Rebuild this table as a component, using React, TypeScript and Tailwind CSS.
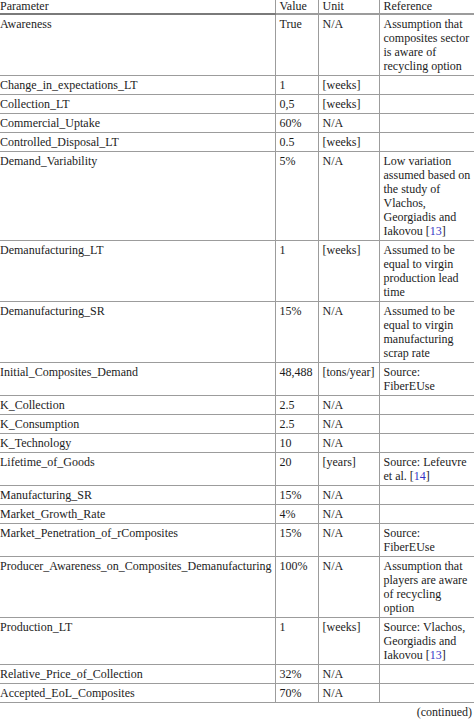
const rows: { name: string; value: string; unit: string; ref: (string | { cite: string; before: string })[] }[] = [
  { name: 'Awareness', value: 'True', unit: 'N/A', ref: ['Assumption that', 'composites sector', 'is aware of', 'recycling option'] },
  { name: 'Change_in_expectations_LT', value: '1', unit: '[weeks]', ref: [] },
  { name: 'Collection_LT', value: '0,5', unit: '[weeks]', ref: [] },
  { name: 'Commercial_Uptake', value: '60%', unit: 'N/A', ref: [] },
  { name: 'Controlled_Disposal_LT', value: '0.5', unit: '[weeks]', ref: [] },
  {
    name: 'Demand_Variability', value: '5%', unit: 'N/A',
    ref: ['Low variation', 'assumed based on', 'the study of', 'Vlachos,', 'Georgiadis and', { before: 'Iakovou ', cite: '13' }],
  },
  { name: 'Demanufacturing_LT', value: '1', unit: '[weeks]', ref: ['Assumed to be', 'equal to virgin', 'production lead', 'time'] },
  { name: 'Demanufacturing_SR', value: '15%', unit: 'N/A', ref: ['Assumed to be', 'equal to virgin', 'manufacturing', 'scrap rate'] },
  { name: 'Initial_Composites_Demand', value: '48,488', unit: '[tons/year]', ref: ['Source:', 'FiberEUse'] },
  { name: 'K_Collection', value: '2.5', unit: 'N/A', ref: [] },
  { name: 'K_Consumption', value: '2.5', unit: 'N/A', ref: [] },
  { name: 'K_Technology', value: '10', unit: 'N/A', ref: [] },
  { name: 'Lifetime_of_Goods', value: '20', unit: '[years]', ref: ['Source: Lefeuvre', { before: 'et al. ', cite: '14' }] },
  { name: 'Manufacturing_SR', value: '15%', unit: 'N/A', ref: [] },
  { name: 'Market_Growth_Rate', value: '4%', unit: 'N/A', ref: [] },
  { name: 'Market_Penetration_of_rComposites', value: '15%', unit: 'N/A', ref: ['Source:', 'FiberEUse'] },
  {
    name: 'Producer_Awareness_on_Composites_Demanufacturing', value: '100%', unit: 'N/A',
    ref: ['Assumption that', 'players are aware', 'of recycling', 'option'],
  },
  { name: 'Production_LT', value: '1', unit: '[weeks]', ref: ['Source: Vlachos,', 'Georgiadis and', { before: 'Iakovou ', cite: '13' }] },
  { name: 'Relative_Price_of_Collection', value: '32%', unit: 'N/A', ref: [] },
  { name: 'Accepted_EoL_Composites', value: '70%', unit: 'N/A', ref: [] },
];

const cell = 'align-top pt-[2px] pb-[2px] border-b border-[#9c9c9c]';
const sep = 'border-l border-[#9c9c9c] pl-[4px]';
const head = 'pb-[1px] pt-0 text-left font-normal leading-[12px] border-b-2 border-[#7a7a7a]';

export default function App() {
  return (
    <div
      className="h-[719px] w-[474px] overflow-hidden bg-white text-[12px] leading-[14px] text-[#1c1c1c]"
      style={{ fontFamily: '"Liberation Serif", "Times New Roman", serif' }}
    >
      <table className="w-[474px] table-fixed border-collapse">
        <colgroup>
          <col className="w-[275px]" />
          <col className="w-[43px]" />
          <col className="w-[61px]" />
          <col className="w-[95px]" />
        </colgroup>
        <thead>
          <tr>
            <th className={head}>Parameter</th>
            <th className={`${head} ${sep}`}>Value</th>
            <th className={`${head} ${sep}`}>Unit</th>
            <th className={`${head} ${sep}`}>Reference</th>
          </tr>
        </thead>
        <tbody>
          {rows.map((r) => (
            <tr key={r.name}>
              <td className={`${cell} whitespace-nowrap`}>{r.name}</td>
              <td className={`${cell} ${sep} whitespace-nowrap`}>{r.value}</td>
              <td className={`${cell} ${sep} whitespace-nowrap`}>{r.unit}</td>
              <td className={`${cell} ${sep} whitespace-nowrap`}>
                {r.ref.map((line, i) => (
                  <div key={i}>
                    {typeof line === 'string' ? (
                      line
                    ) : (
                      <>
                        {line.before}[<span className="text-[#3434c4]">{line.cite}</span>]
                      </>
                    )}
                  </div>
                ))}
              </td>
            </tr>
          ))}
        </tbody>
      </table>
      <div className="mt-[2px] pr-[2px] text-right">(continued)</div>
    </div>
  );
}
